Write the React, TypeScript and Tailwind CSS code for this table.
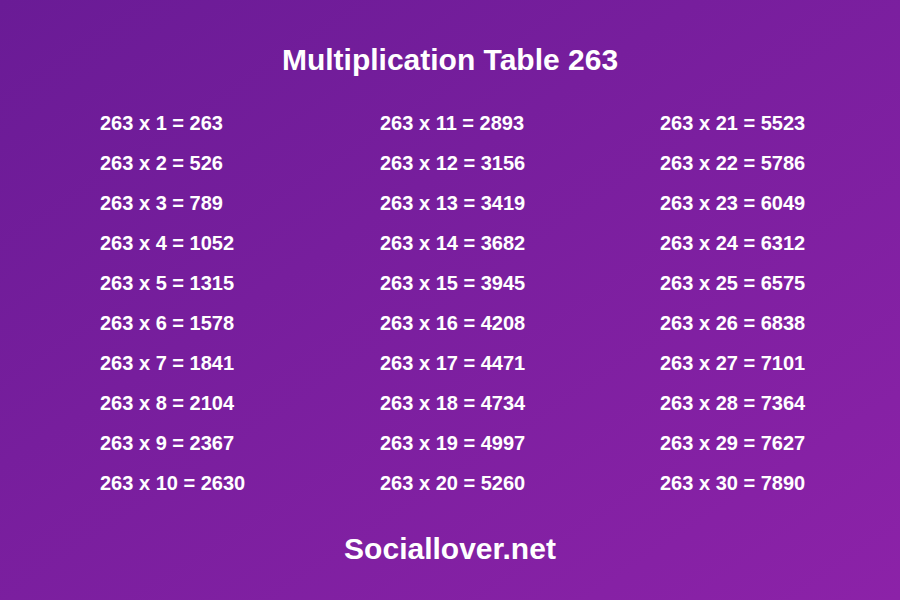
const n = 263;

const columns = [0, 1, 2].map((c) =>
  Array.from({ length: 10 }, (_, i) => c * 10 + i + 1)
);

export default function App() {
  return (
    <main
      className="h-[600px] w-[900px] overflow-hidden bg-gradient-to-br from-[#6a1b96] to-[#8c22a8] text-white"
      style={{ fontFamily: '"Liberation Sans", Arial, sans-serif' }}
    >
      <h1 className="pt-[42px] text-center text-[30px] font-bold leading-[36px]">
        Multiplication Table {n}
      </h1>

      <div className="mt-[25px] grid grid-cols-[280px_280px_240px] pl-[100px]">
        {columns.map((col, c) => (
          <div key={c} className="flex flex-col">
            {col.map((k) => (
              <p key={k} className="text-[20px] font-bold leading-[40px]">
                {n} x {k} = {n * k}
              </p>
            ))}
          </div>
        ))}
      </div>

      <p className="mt-[28px] text-center text-[30px] font-bold leading-[36px]">
        Sociallover.net
      </p>
    </main>
  );
}
